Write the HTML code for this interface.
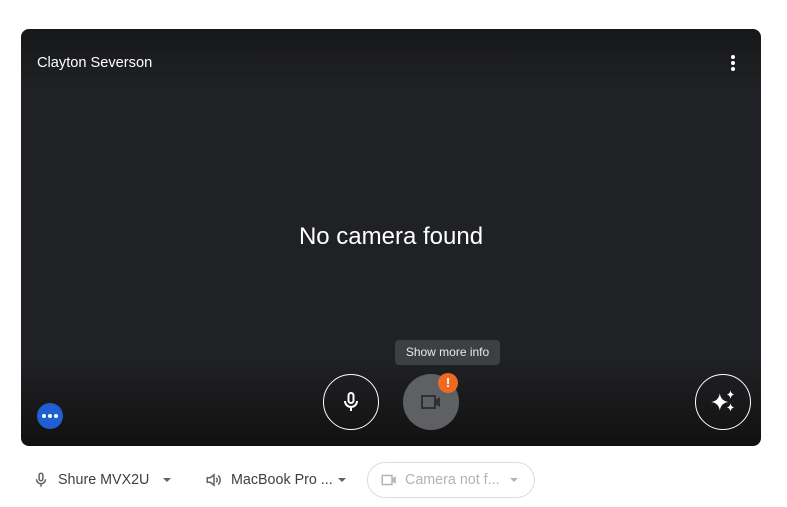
<!DOCTYPE html>
<html><head><meta charset="utf-8"><style>
*{margin:0;padding:0;box-sizing:border-box}
body{width:787px;height:507px;background:#fff;font-family:"Liberation Sans",sans-serif;position:relative;overflow:hidden}
.card{position:absolute;left:21px;top:29px;width:740px;height:417px;border-radius:8px;background:linear-gradient(#161718 0px,#202124 60px,#202124 330px,#111 417px)}
.name{position:absolute;left:16px;top:26px;color:#fff;font-size:14.6px}
.dots{position:absolute;right:26px;top:26px;width:4px}
.dots i{display:block;width:4px;height:4px;border-radius:50%;background:#fff;margin-bottom:2px}
.msg{position:absolute;left:0;right:0;top:194px;text-align:center;color:#fff;font-size:24px}
.tip{position:absolute;left:374px;top:311px;width:105px;height:25px;background:#3c4043;border-radius:4px;color:#e8eaed;font-size:12px;line-height:25px;text-align:center}
.btn{position:absolute;width:56px;height:56px;border-radius:50%;border:1.5px solid #fff;display:flex;align-items:center;justify-content:center}
.cam{background:#5f6063;border:none}
.badge{position:absolute;left:417px;top:344px;width:20px;height:20px;border-radius:50%;background:#ee6a22;color:#fff;font-weight:bold;font-size:13px;text-align:center;line-height:20px}
.more{position:absolute;left:16px;top:374px;width:26px;height:26px;border-radius:50%;background:#1f5fd1;display:flex;align-items:center;justify-content:center;gap:2px}
.more i{width:4px;height:4px;border-radius:50%;background:#fff}
.bar{position:absolute;top:462px;height:36px;display:flex;align-items:center;font-size:14.3px;color:#3c4043}
.caret{display:inline-block;width:0;height:0;border-left:4px solid transparent;border-right:4px solid transparent;border-top:4px solid #5f6368;margin-left:10px}
</style></head><body>
<div class="card">
<div class="name">Clayton Severson</div>
<div class="dots"><i></i><i></i><i></i></div>
<div class="msg">No camera found</div>
<div class="tip">Show more info</div>
<div class="btn" style="left:302px;top:345px"><svg width="24" height="24" viewBox="0 0 24 24"><rect x="9.5" y="3" width="5" height="10" rx="2.5" fill="none" stroke="#fff" stroke-width="2"/><path d="M6 11a6 6 0 0 0 12 0M12 17v4" fill="none" stroke="#fff" stroke-width="2"/></svg></div>
<div class="btn cam" style="left:382px;top:345px"><svg width="24" height="24" viewBox="0 0 24 24"><rect x="3" y="6" width="13" height="12" fill="none" stroke="#2f3033" stroke-width="2"/><path d="M16 10l5-3v10l-5-3z" fill="#2f3033"/></svg></div>
<div class="badge">!</div>
<div class="btn" style="left:674px;top:345px"><svg width="30" height="30" viewBox="0 0 28 28" fill="#fff"><path d="M11 6q1 7 8 8q-7 1-8 8q-1-7-8-8q7-1 8-8z"/><path d="M21 3q.5 3.5 3.5 4q-3 .5-3.5 4q-.5-3.5-3.5-4q3-.5 3.5-4z"/><path d="M21 15q.5 3.5 3.5 4q-3 .5-3.5 4q-.5-3.5-3.5-4q3-.5 3.5-4z"/></svg></div>
<div class="more"><i></i><i></i><i></i></div>
</div>
<div class="bar" style="left:32px"><svg width="18" height="18" viewBox="0 0 24 24"><rect x="9.5" y="3" width="5" height="10" rx="2.5" fill="none" stroke="#5f6368" stroke-width="2"/><path d="M6 11a6 6 0 0 0 12 0M12 17v4" fill="none" stroke="#5f6368" stroke-width="2"/></svg><span style="margin-left:8px">Shure MVX2U</span><span class="caret" style="margin-left:14px"></span></div>
<div class="bar" style="left:205px"><svg width="18" height="18" viewBox="0 0 24 24" fill="none" stroke="#5f6368" stroke-width="2"><path d="M3 9h4l5-4v14l-5-4H3z"/><path d="M15 9a4 4 0 0 1 0 6M17.5 6a8 8 0 0 1 0 12"/></svg><span style="margin-left:8px">MacBook Pro ...</span><span class="caret" style="margin-left:5px"></span></div>
<div class="bar" style="left:367px;width:168px;height:36px;border:1px solid #dadce0;border-radius:18px;padding-left:12px;color:#b0b3b8"><svg width="18" height="18" viewBox="0 0 24 24"><rect x="3" y="6" width="13" height="12" fill="none" stroke="#b0b3b8" stroke-width="2"/><path d="M16 10l5-3v10l-5-3z" fill="#b0b3b8"/></svg><span style="margin-left:7px">Camera not f...</span><span class="caret" style="border-top-color:#b0b3b8"></span></div>
</body></html>
